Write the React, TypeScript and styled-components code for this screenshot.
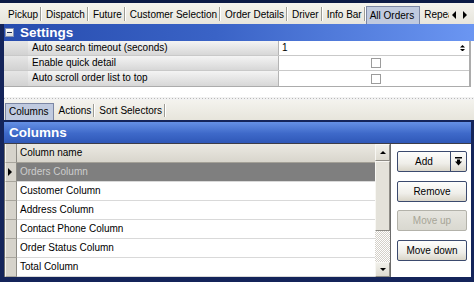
import React from 'react';
import styled, { createGlobalStyle } from 'styled-components';

const NAVY = '#14245a';

const GlobalStyle = createGlobalStyle`
  html, body {
    margin: 0;
    padding: 0;
  }
  body {
    width: 474px;
    height: 282px;
    overflow: hidden;
    background: #ffffff;
    font-family: 'Liberation Sans', Arial, sans-serif;
    font-size: 10px;
    color: #000000;
  }
`;

const Window = styled.div`
  width: 474px;
  height: 282px;
  box-sizing: border-box;
  border-top: 3px solid #0b1a46;
  display: flex;
  flex-direction: column;
  background: #ffffff;
`;

const TabStrip = styled.div<{ $height: number }>`
  flex: none;
  height: ${p => p.$height}px;
  display: flex;
  align-items: flex-end;
  background: linear-gradient(#f4f3ee, #e7e5dc);
`;

const TabList = styled.div<{ $pad: number }>`
  flex: 1;
  min-width: 0;
  height: 100%;
  display: flex;
  align-items: flex-end;
  overflow: hidden;
  padding-left: ${p => p.$pad}px;
  white-space: nowrap;
`;

const Tab = styled.div<{ $active?: boolean; $h: number }>`
  flex: none;
  height: ${p => p.$h}px;
  line-height: ${p => p.$h - 1}px;
  box-sizing: border-box;
  color: #000000;
  ${p =>
    p.$active
      ? `
    background: #c0cadf;
    border: 1px solid #7c87a4;
    border-bottom: none;
    padding: 0 5px 0 3px;
  `
      : `
    background:
      linear-gradient(#9d9c95, #9d9c95) no-repeat right 1px top 1px / 1px ${p.$h - 4}px,
      linear-gradient(#ffffff, #ffffff) no-repeat right 0 top 1px / 1px ${p.$h - 4}px;
    padding: 0 4px 0 4px;
  `}
`;

const ScrollArrows = styled.div`
  flex: none;
  width: 25px;
  height: 100%;
  display: flex;
  align-items: center;
  justify-content: space-between;
  padding: 2px 7px 0 3px;
  box-sizing: border-box;
  background: linear-gradient(#f4f3ee, #e7e5dc);
`;

const Body = styled.div`
  flex: 1;
  min-height: 0;
  display: flex;
  flex-direction: column;
  border-left: 4px solid ${NAVY};
`;

const SettingsHeader = styled.div`
  flex: none;
  height: 17px;
  display: flex;
  align-items: center;
  gap: 6px;
  padding-left: 1px;
  background: linear-gradient(to right, #274cae, #3a63c6 45%, #6b96f2);
  color: #ffffff;
  font-weight: bold;
  font-size: 13.5px;
`;

const CollapseBox = styled.div`
  width: 9px;
  height: 9px;
  box-sizing: border-box;
  border: 1px solid #8591b3;
  background: linear-gradient(#ffffff, #dcdcdc);
  display: flex;
  align-items: center;
  justify-content: center;

  &::before {
    content: '';
    width: 5px;
    height: 1px;
    background: #1b2a55;
  }
`;

const PropGrid = styled.div`
  flex: none;
  margin-right: 3px;
  border-right: 2px solid #acacac;
  border-bottom: 1px solid #acacac;
`;

const PropRow = styled.div`
  display: grid;
  grid-template-columns: 24px 250px 1fr;
  height: 15px;
  box-sizing: border-box;
  border-bottom: 1px solid #c9c9c9;

  &:last-child {
    border-bottom: none;
  }
`;

const MarginCell = styled.div`
  background: linear-gradient(#e6e6e6, #d2d2d2);
`;

const LabelCell = styled.div`
  padding-left: 4px;
  line-height: 14px;
  background: linear-gradient(#f4f4f4, #d7d7d7);
  white-space: nowrap;
`;

const ValueCell = styled.div<{ $center?: boolean }>`
  border-left: 1px solid #b4b4b4;
  background: #ffffff;
  display: flex;
  align-items: center;
  justify-content: ${p => (p.$center ? 'center' : 'space-between')};
  padding: 0 4px 0 3px;
  line-height: 14px;
`;

const CheckBox = styled.div`
  width: 10px;
  height: 10px;
  box-sizing: border-box;
  border: 1px solid #9c9c9c;
  background: #ffffff;
  margin-left: 4px;
`;

const Spinner = styled.div`
  display: flex;
  flex-direction: column;
  gap: 1px;
`;

const Spacer = styled.div`
  flex: none;
  height: 10px;
  background: #ffffff;
`;

const Splitter = styled.div`
  flex: none;
  height: 3px;
  background:
    repeating-linear-gradient(to right, #b8b8b8 0 1px, transparent 1px 3px) no-repeat 0 1px / 100% 1px,
    #f2f2f2;
`;

const Lower = styled.div`
  flex: 1;
  min-height: 0;
  display: flex;
  flex-direction: column;
  border-right: 3px solid ${NAVY};
  border-bottom: 5px solid ${NAVY};
`;

const ColumnsHeader = styled.div`
  flex: none;
  height: 21px;
  border-top: 2px solid ${NAVY};
  border-bottom: 1px solid #3d3d48;
  display: flex;
  align-items: center;
  padding-left: 5px;
  background: linear-gradient(#6590e4, #3e69c9 55%, #2f58b8);
  color: #ffffff;
  font-weight: bold;
  font-size: 13.5px;
`;

const Content = styled.div`
  flex: 1;
  min-height: 0;
  display: flex;
`;

const Grid = styled.div`
  flex: 1;
  min-width: 0;
  display: flex;
  flex-direction: column;
  border-left: 1px solid #6e6e6e;
  overflow: hidden;
`;

const GridRow = styled.div<{ $header?: boolean; $selected?: boolean }>`
  flex: none;
  display: flex;
  height: 19px;
  box-sizing: border-box;
  border-bottom: 1px solid ${p => (p.$header ? '#a3a097' : '#d9d9d9')};
  background: ${p =>
    p.$header ? 'linear-gradient(#ebe9e2, #d8d5cc)' : p.$selected ? '#7f7f7f' : '#ffffff'};
  color: ${p => (p.$selected ? '#cdcdcd' : '#000000')};
`;

const RowHead = styled.div`
  flex: none;
  width: 12px;
  box-sizing: border-box;
  margin-bottom: -1px;
  background: #d6d3cb;
  border-left: 1px solid #f6f5f1;
  border-right: 1px solid #8e8c86;
  border-bottom: 1px solid #a8a59d;
  display: flex;
  align-items: center;
  padding-left: 2px;
`;

const Cell = styled.div`
  flex: 1;
  padding-left: 3px;
  line-height: 18px;
  white-space: nowrap;
`;

const ScrollBar = styled.div`
  flex: none;
  width: 15px;
  display: flex;
  flex-direction: column;
`;

const ScrollButton = styled.div<{ $h: number }>`
  flex: none;
  height: ${p => p.$h}px;
  box-sizing: border-box;
  background: linear-gradient(#f1f0ea, #dedbd1);
  border: 1px solid;
  border-color: #f8f7f3 #8e8c86 #8e8c86 #f8f7f3;
  display: flex;
  align-items: center;
  justify-content: center;
`;

const Thumb = styled.div`
  flex: none;
  height: 70px;
  box-sizing: border-box;
  background: #e4e2da;
  border: 1px solid;
  border-color: #f8f7f3 #8e8c86 #8e8c86 #f8f7f3;
`;

const Track = styled.div`
  flex: 1;
  background: repeating-conic-gradient(#d4d0c8 0 25%, #ffffff 0 50%) 0 0 / 2px 2px;
`;

const ButtonPanel = styled.div`
  flex: none;
  width: 81px;
  border-left: 1px solid #6b6b6b;
  background: #ffffff;
  display: flex;
  flex-direction: column;
  gap: 8.5px;
  padding: 7px 0 0 6px;
  box-sizing: border-box;
`;

const Button = styled.div<{ $disabled?: boolean }>`
  width: 70px;
  height: 21px;
  box-sizing: border-box;
  border: 1px solid ${p => (p.$disabled ? '#b3b2aa' : '#3b4a6e')};
  border-radius: 2px;
  background: ${p =>
    p.$disabled ? 'linear-gradient(#e6e5df, #d9d8d0)' : 'linear-gradient(#fefefc, #efeee9 60%, #d9d5c8)'};
  color: ${p => (p.$disabled ? '#a7a597' : '#000000')};
  display: flex;
  align-items: stretch;
  font-size: 10px;
`;

const ButtonLabel = styled.div`
  flex: 1;
  display: flex;
  align-items: center;
  justify-content: center;
`;

const DropPart = styled.div`
  flex: none;
  width: 15px;
  border-left: 1px solid #3b4a6e;
  display: flex;
  align-items: center;
  justify-content: center;
`;

const Triangle = ({ dir, size = 4 }: { dir: 'up' | 'down' | 'left' | 'right'; size?: number }) => {
  const s = size;
  const pts = {
    up: `0,${s} ${s * 2},${s} ${s},0`,
    down: `0,0 ${s * 2},0 ${s},${s}`,
    left: `${s},0 ${s},${s * 2} 0,${s}`,
    right: `0,0 0,${s * 2} ${s},${s}`,
  }[dir];
  const horiz = dir === 'left' || dir === 'right';
  return (
    <svg width={horiz ? s : s * 2} height={horiz ? s * 2 : s} style={{ display: 'block' }}>
      <polygon points={pts} fill="#000000" />
    </svg>
  );
};

const DropIcon = () => (
  <svg width="7" height="9" style={{ display: 'block' }}>
    <rect x="0" y="0" width="7" height="1.5" fill="#000" />
    <rect x="2" y="2.5" width="3" height="2.5" fill="#000" />
    <polygon points="0,4.5 7,4.5 3.5,8.5" fill="#000" />
  </svg>
);

const topTabs = [
  'Pickup',
  'Dispatch',
  'Future',
  'Customer Selection',
  'Order Details',
  'Driver',
  'Info Bar',
  'All Orders',
  'Repea',
];

const columns = [
  'Orders Column',
  'Customer Column',
  'Address Column',
  'Contact Phone Column',
  'Order Status Column',
  'Total Column',
];

export default function App() {
  return (
    <Window>
      <GlobalStyle />
      <TabStrip $height={21}>
        <TabList $pad={4}>
          {topTabs.map(t => (
            <Tab key={t} $h={18} $active={t === 'All Orders'}>
              {t}
            </Tab>
          ))}
        </TabList>
        <ScrollArrows>
          <Triangle dir="left" />
          <Triangle dir="right" />
        </ScrollArrows>
      </TabStrip>

      <Body>
        <SettingsHeader>
          <CollapseBox />
          Settings
        </SettingsHeader>
        <PropGrid>
          <PropRow>
            <MarginCell />
            <LabelCell>Auto search timeout (seconds)</LabelCell>
            <ValueCell>
              <span>1</span>
              <Spinner>
                <Triangle dir="up" size={2.5} />
                <Triangle dir="down" size={2.5} />
              </Spinner>
            </ValueCell>
          </PropRow>
          <PropRow>
            <MarginCell />
            <LabelCell>Enable quick detail</LabelCell>
            <ValueCell $center>
              <CheckBox />
            </ValueCell>
          </PropRow>
          <PropRow>
            <MarginCell />
            <LabelCell>Auto scroll order list to top</LabelCell>
            <ValueCell $center>
              <CheckBox />
            </ValueCell>
          </PropRow>
        </PropGrid>
        <Spacer />
        <Splitter />
        <TabStrip $height={20}>
          <TabList $pad={1}>
            <Tab $h={17} $active>
              Columns
            </Tab>
            <Tab $h={17}>Actions</Tab>
            <Tab $h={17}>Sort Selectors</Tab>
          </TabList>
        </TabStrip>

        <Lower>
          <ColumnsHeader>Columns</ColumnsHeader>
          <Content>
            <Grid>
              <GridRow $header>
                <RowHead />
                <Cell>Column name</Cell>
              </GridRow>
              {columns.map((c, i) => (
                <GridRow key={c} $selected={i === 0}>
                  <RowHead>{i === 0 && <Triangle dir="right" size={4} />}</RowHead>
                  <Cell>{c}</Cell>
                </GridRow>
              ))}
            </Grid>
            <ScrollBar>
              <ScrollButton $h={17}>
                <Triangle dir="up" size={3} />
              </ScrollButton>
              <Thumb />
              <Track />
              <ScrollButton $h={15}>
                <Triangle dir="down" size={3} />
              </ScrollButton>
            </ScrollBar>
            <ButtonPanel>
              <Button>
                <ButtonLabel>Add</ButtonLabel>
                <DropPart>
                  <DropIcon />
                </DropPart>
              </Button>
              <Button>
                <ButtonLabel>Remove</ButtonLabel>
              </Button>
              <Button $disabled>
                <ButtonLabel>Move up</ButtonLabel>
              </Button>
              <Button>
                <ButtonLabel>Move down</ButtonLabel>
              </Button>
            </ButtonPanel>
          </Content>
        </Lower>
      </Body>
    </Window>
  );
}
